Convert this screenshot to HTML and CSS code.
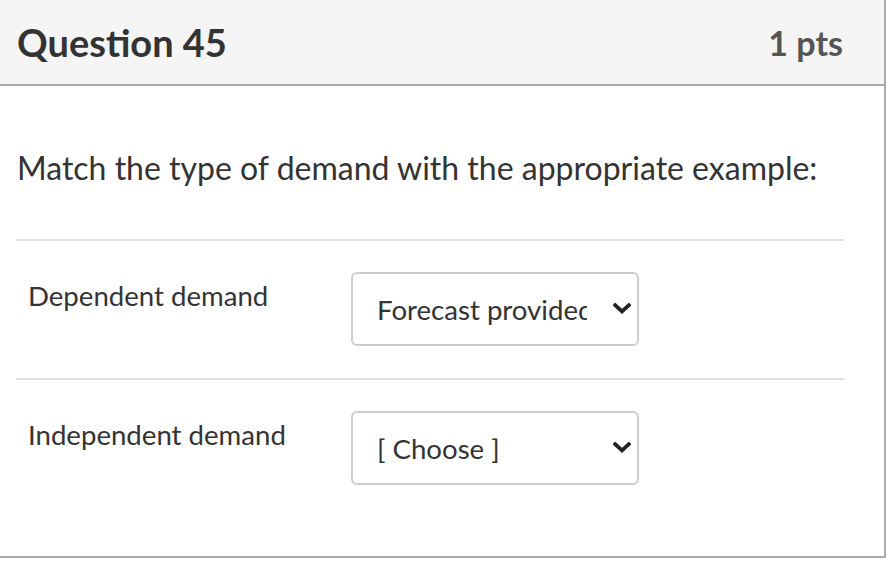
FILE: index.html
```html
<!DOCTYPE html>
<html>
<head>
<meta charset="utf-8">
<link rel="stylesheet" href="styles.css">
</head>
<body>
<div class="card">
  <div class="header">
    <span class="title">Question 45</span>
    <span class="pts">1 pts</span>
  </div>
  <div class="content">
    <p class="question-text">Match the type of demand with the appropriate example:</p>
    <div class="match-row">
      <div class="label">Dependent demand</div>
      <div class="select-wrap">
        <select class="select">
          <option>Forecast provided by marketing</option>
        </select>
        <svg class="chevron" viewBox="0 0 18 11" width="18" height="11"><polyline points="2.2,2.2 9,8.4 15.8,2.2" fill="none" stroke="#222" stroke-width="3.8" stroke-linecap="square" stroke-linejoin="miter"/></svg>
      </div>
    </div>
    <div class="match-row">
      <div class="label">Independent demand</div>
      <div class="select-wrap">
        <select class="select">
          <option>[ Choose ]</option>
        </select>
        <svg class="chevron" viewBox="0 0 18 11" width="18" height="11"><polyline points="2.2,2.2 9,8.4 15.8,2.2" fill="none" stroke="#222" stroke-width="3.8" stroke-linecap="square" stroke-linejoin="miter"/></svg>
      </div>
    </div>
  </div>
</div>
</body>
</html>
```

FILE: styles.css
```css
html, body {
  margin: 0;
  padding: 0;
  background: #ffffff;
}
body {
  font-family: Lato, "Open Sans", "Liberation Sans", sans-serif;
  color: #333333;
}
.card {
  width: 884px;
  border-right: 2px solid #aaaaaa;
  border-bottom: 2px solid #aaaaaa;
  background: #ffffff;
}
.header {
  height: 84px;
  background: #f5f5f5;
  border-bottom: 2px solid #aaaaaa;
  display: flex;
  align-items: center;
  justify-content: space-between;
  padding: 0 41px 0 17px;
}
.title {
  font-size: 38px;
  font-weight: 700;
  color: #333333;
}
.pts {
  font-size: 34px;
  font-weight: 700;
  color: #555555;
}
.content {
  padding: 0 40px 71px 16px;
}
.question-text {
  margin: 0;
  padding: 63px 0 52px 1px;
  font-size: 32px;
  line-height: 1.2;
  color: #333333;
}
.match-row {
  display: flex;
  align-items: flex-start;
  border-top: 2px solid #e0e0e0;
  padding: 31px 0 32px;
}
.match-row:last-child {
  padding-bottom: 0;
}
.label {
  width: 323px;
  padding-left: 12px;
  padding-top: 7px;
  font-size: 27.6px;
  line-height: 1.2;
  color: #333333;
}
.select-wrap {
  position: relative;
  width: 288px;
  height: 74px;
}
.select {
  appearance: none;
  -webkit-appearance: none;
  box-sizing: border-box;
  width: 288px;
  height: 74px;
  margin: 0;
  padding: 0 50px 0 24px;
  border: 2px solid #cccccc;
  border-radius: 6px;
  background: #ffffff;
  font-family: Lato, "Open Sans", "Liberation Sans", sans-serif;
  font-size: 27.6px;
  color: #333333;
  outline: none;
}
.chevron {
  position: absolute;
  right: 8px;
  top: 31px;
  pointer-events: none;
}
```
